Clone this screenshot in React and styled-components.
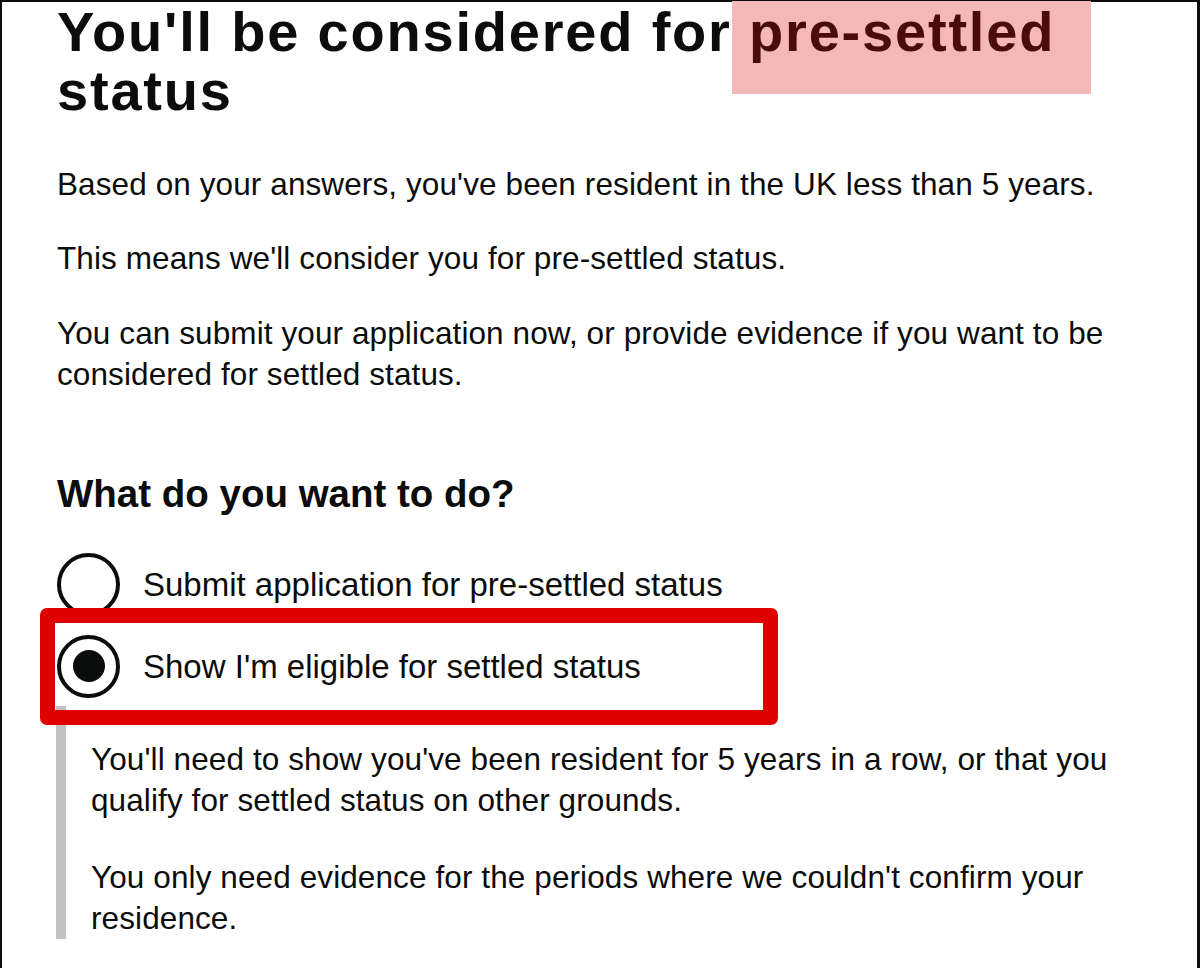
import React from "react";
import styled, { createGlobalStyle } from "styled-components";

const Global = createGlobalStyle`
  html, body { margin: 0; padding: 0; background: #ffffff; }
  body { font-family: "Liberation Sans", Arial, sans-serif; color: #0b0c0c; }
  *, *::before, *::after { box-sizing: border-box; }
`;

const Frame = styled.div`
  width: 1200px;
  height: 968px;
  border: 2px solid #0b0c0c;
  border-bottom: none;
  border-right-width: 3px;
  background: #ffffff;
  padding: 0 57px 0 55px;
`;

const Title = styled.h1`
  margin: 0;
  font-size: 56px;
  line-height: 59px;
  font-weight: 700;
  letter-spacing: 1.8px;
  isolation: isolate;
`;

const Highlight = styled.span`
  position: relative;
  color: #4a0b0b;
  &::before {
    content: "";
    position: absolute;
    left: -17px;
    right: -36px;
    top: 1px;
    bottom: -31px;
    background: #f4b8b8;
    z-index: -1;
  }
`;

const Lead = styled.div`
  margin-top: 43.5px;
  display: flex;
  flex-direction: column;
  gap: 33.5px;
`;

const Body = styled.p`
  margin: 0;
  font-size: 31.5px;
  line-height: 41px;
  letter-spacing: 0.1px;
`;

const Question = styled.h2`
  margin: 76px 0 0;
  font-size: 38.5px;
  line-height: 46px;
  font-weight: 700;
`;

const Radios = styled.div`
  margin-top: 36px;
  display: flex;
  flex-direction: column;
  gap: 19px;
`;

const RadioItem = styled.label`
  position: relative;
  display: flex;
  align-items: center;
  gap: 23px;
  height: 63px;
  ${(p) =>
    p.$marked &&
    `
    &::after {
      content: "";
      position: absolute;
      left: -17px;
      top: -27px;
      width: 738px;
      bottom: -27px;
      border: 15px solid #e00000;
      border-radius: 7px;
      pointer-events: none;
    }
  `}
`;

const Circle = styled.span`
  flex: none;
  width: 63px;
  height: 63px;
  border: 4px solid #0b0c0c;
  border-radius: 50%;
  display: flex;
  align-items: center;
  justify-content: center;
  background: #ffffff;
  &::before {
    content: "";
    width: 32px;
    height: 32px;
    border-radius: 50%;
    background: #0b0c0c;
    display: ${(p) => (p.$checked ? "block" : "none")};
  }
`;

const Label = styled.span`
  font-size: 33px;
  line-height: 41px;
`;

const Reveal = styled.div`
  margin-top: 8px;
  margin-left: -1px;
  border-left: 10px solid #bfc1c3;
  padding: 33px 0 0 25px;
  display: flex;
  flex-direction: column;
  gap: 36px;
`;

export default function App() {
  return (
    <>
      <Global />
      <Frame>
        <Title>
          You'll be considered for <Highlight>pre-settled</Highlight> status
        </Title>
        <Lead>
          <Body>
            Based on your answers, you've been resident in the UK less than 5
            years.
          </Body>
          <Body>This means we'll consider you for pre-settled status.</Body>
          <Body>
            You can submit your application now, or provide evidence if you want
            to be considered for settled status.
          </Body>
        </Lead>
        <Question>What do you want to do?</Question>
        <Radios>
          <RadioItem>
            <Circle />
            <Label>Submit application for pre-settled status</Label>
          </RadioItem>
          <RadioItem $marked>
            <Circle $checked />
            <Label>Show I'm eligible for settled status</Label>
          </RadioItem>
        </Radios>
        <Reveal>
          <Body>
            You'll need to show you've been resident for 5 years in a row, or
            that you qualify for settled status on other grounds.
          </Body>
          <Body>
            You only need evidence for the periods where we couldn't confirm
            your residence.
          </Body>
        </Reveal>
      </Frame>
    </>
  );
}
